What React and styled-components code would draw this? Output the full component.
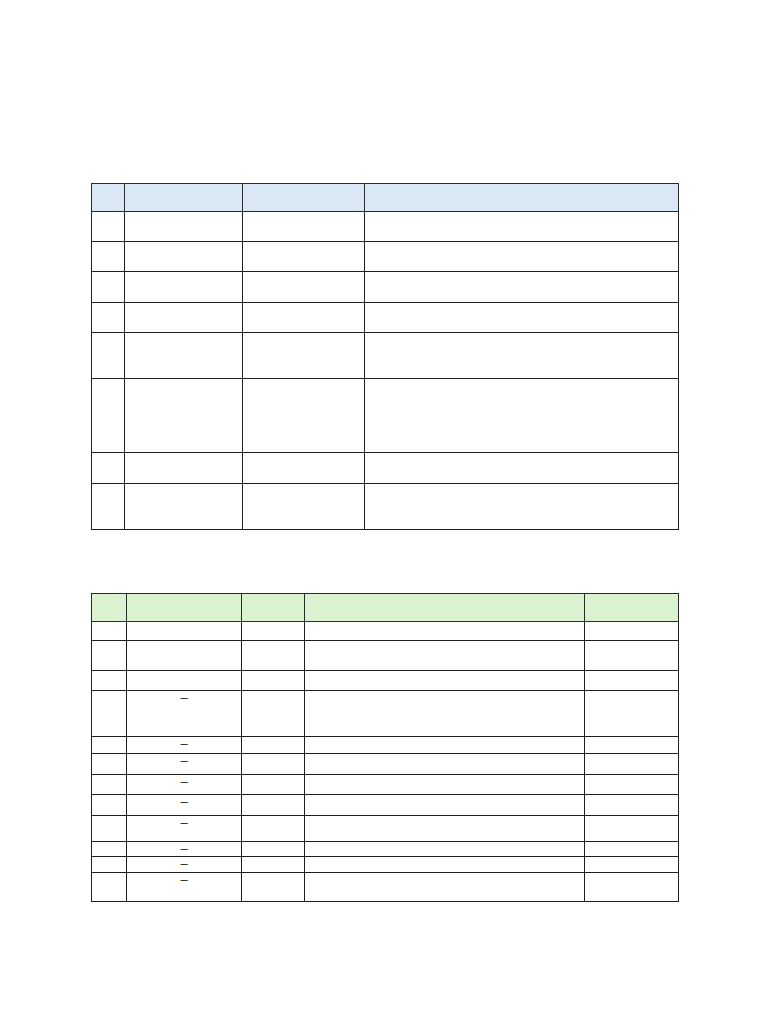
import styled, { createGlobalStyle } from "styled-components";

const GlobalStyle = createGlobalStyle`
  body {
    margin: 0;
    background: #ffffff;
    font-family: "Liberation Sans", Arial, sans-serif;
  }
`;

const Page = styled.div`
  width: 768px;
  min-height: 1024px;
  box-sizing: border-box;
  padding: 183px 0 0 91px;
  display: flex;
  flex-direction: column;
  gap: 63px;
`;

const Table = styled.table`
  width: 587px;
  border-collapse: collapse;
  table-layout: fixed;
  border: 1px solid #3a3a3a;
`;

const HeadCell = styled.th`
  height: ${(p) => p.$h}px;
  padding: 0;
  background: ${(p) => p.$bg};
  border: 1px solid #2a2a2a;
  border-left-color: ${(p) => (p.$soft ? "#6e6e6e" : "#2a2a2a")};
`;

const Cell = styled.td`
  height: ${(p) => p.$h}px;
  padding: 0;
  vertical-align: top;
  text-align: center;
  border: 1px solid #1e1e1e;
  border-left-color: ${(p) => (p.$soft ? "#707070" : "#222222")};
  font-size: 13px;
  line-height: 14px;
  color: #2a2a2a;
`;

const blueCols = [33, 118, 122, 314];
const blueRows = [30, 30, 31, 30, 46, 74, 31, 46];

const greenCols = [35, 115, 63, 280, 94];
const greenRows = [19, 30, 20, 46, 17, 21, 20, 21, 26, 15, 16, 29];

const Grid = ({ cols, rows, head, headH, dashFrom }) => (
  <Table>
    <colgroup>
      {cols.map((w, i) => (
        <col key={i} style={{ width: w }} />
      ))}
    </colgroup>
    <thead>
      <tr>
        {cols.map((_, i) => (
          <HeadCell key={i} $h={headH} $bg={head} $soft={i === 1 || i === cols.length - 1} />
        ))}
      </tr>
    </thead>
    <tbody>
      {rows.map((h, r) => (
        <tr key={r}>
          {cols.map((_, c) => (
            <Cell key={c} $h={h - 1} $soft={c === 1 || c === cols.length - 1}>
              {dashFrom !== undefined && c === 1 && r >= dashFrom ? "–" : ""}
            </Cell>
          ))}
        </tr>
      ))}
    </tbody>
  </Table>
);

export default function App() {
  return (
    <>
      <GlobalStyle />
      <Page>
        <Grid cols={blueCols} rows={blueRows} head="#dae8f6" headH={27} />
        <Grid cols={greenCols} rows={greenRows} head="#daf2d0" headH={27} dashFrom={3} />
      </Page>
    </>
  );
}
